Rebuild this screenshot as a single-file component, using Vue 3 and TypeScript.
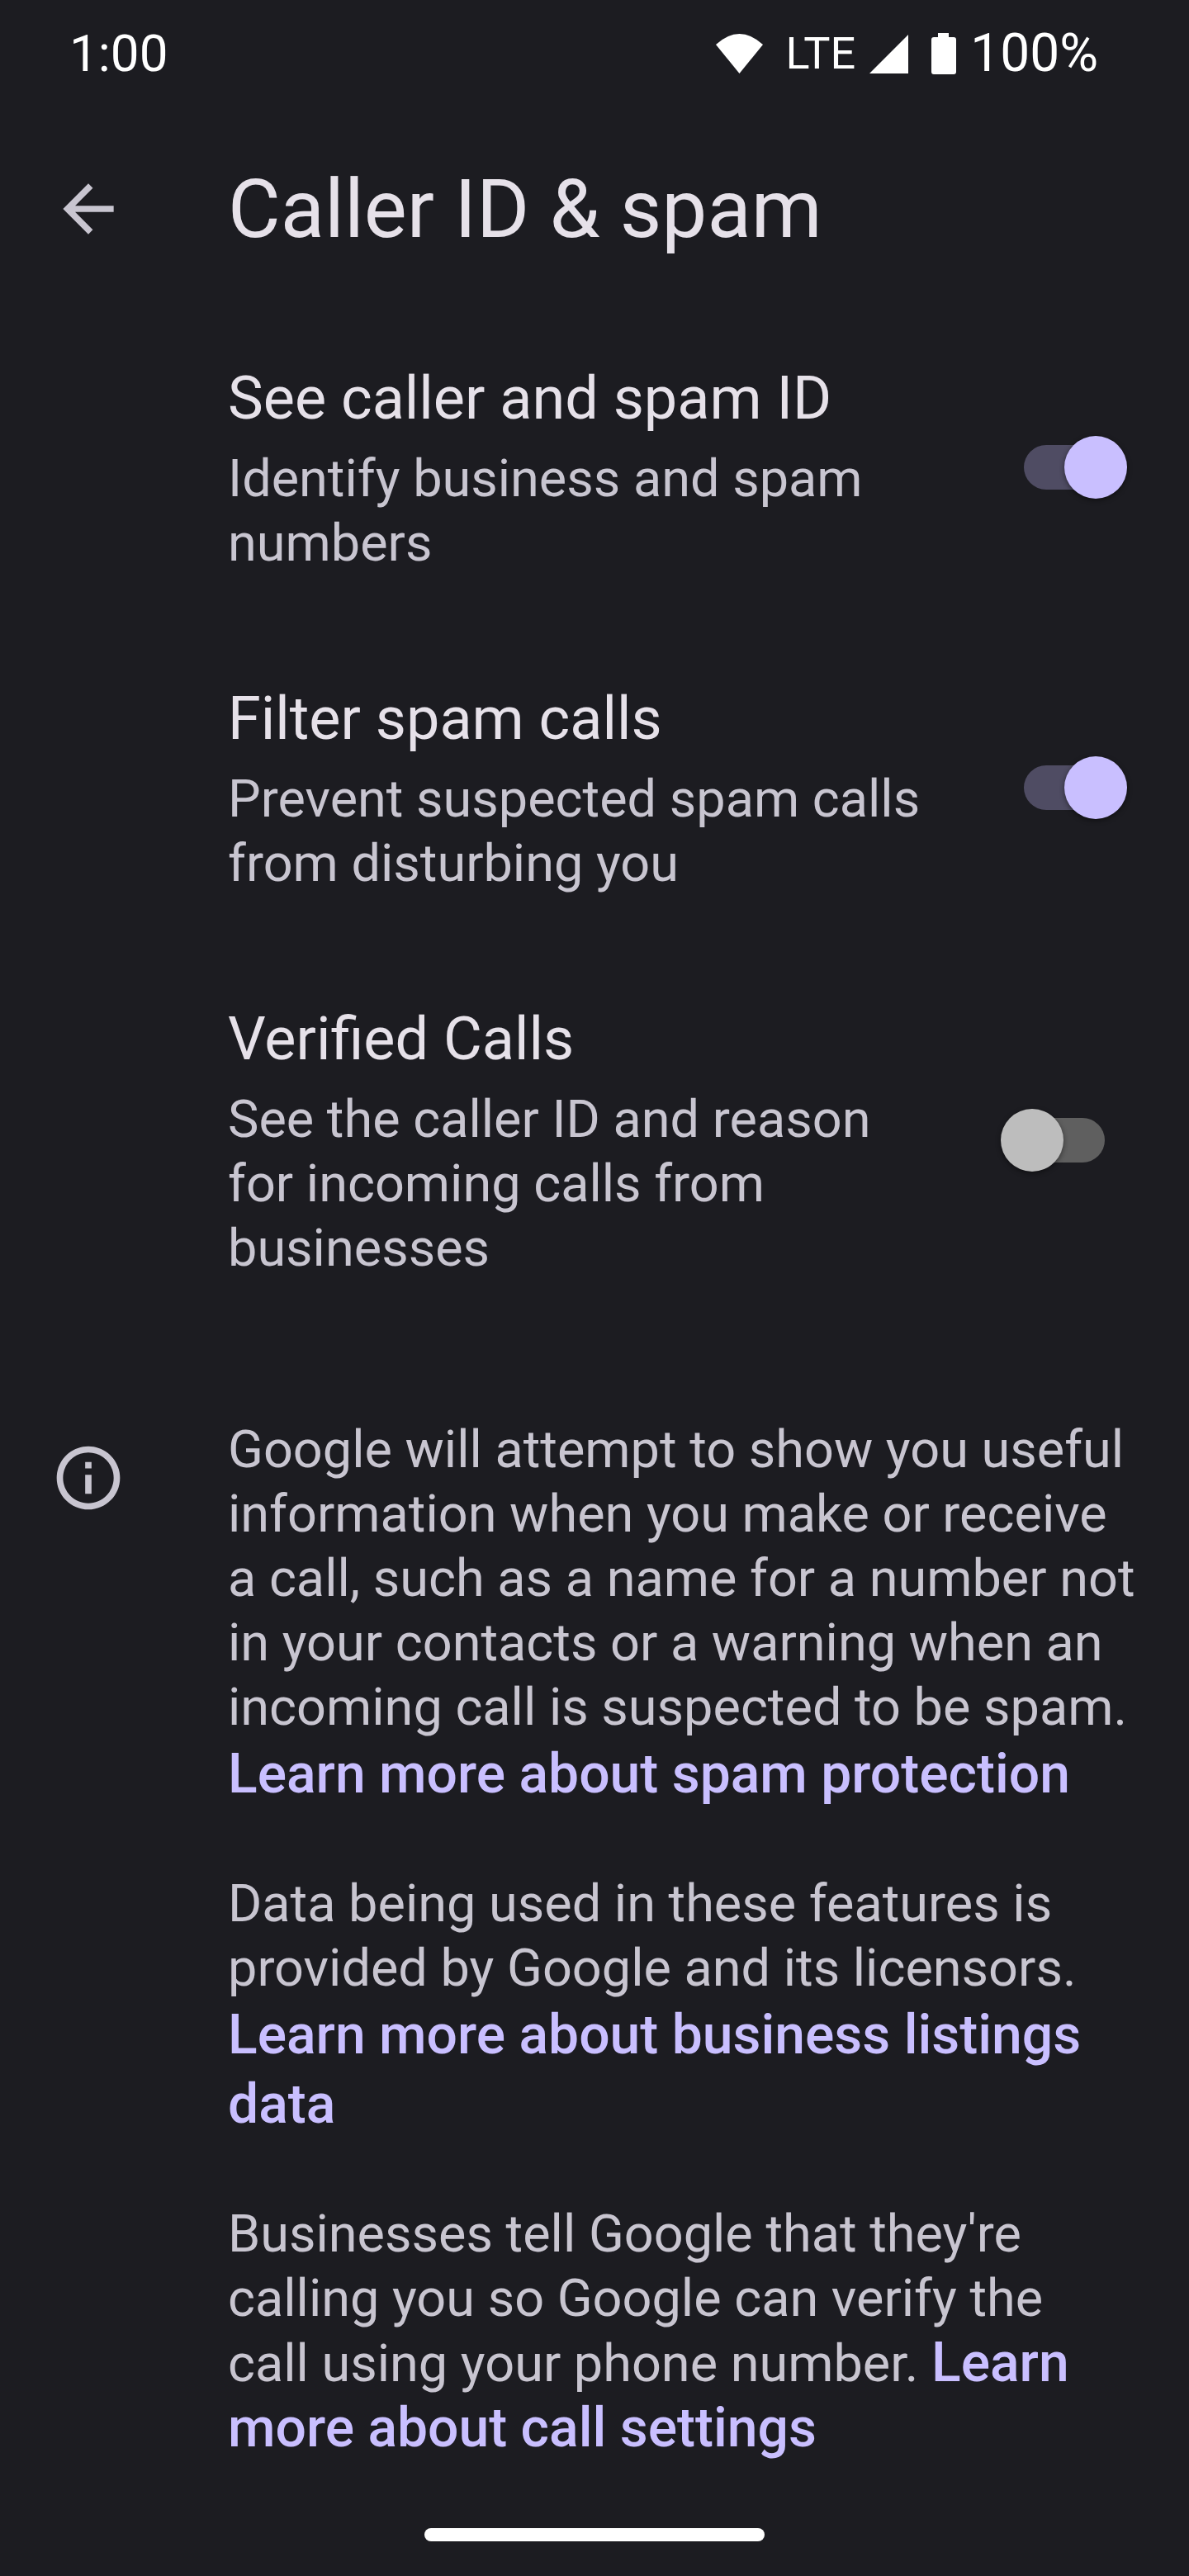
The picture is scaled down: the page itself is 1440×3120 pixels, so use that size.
<script setup lang="ts">
const rows = [
  { title: 'See caller and spam ID', lines: ['Identify business and spam', 'numbers'], on: true },
  { title: 'Filter spam calls', lines: ['Prevent suspected spam calls', 'from disturbing you'], on: true },
  { title: 'Verified Calls', lines: ['See the caller ID and reason', 'for incoming calls from', 'businesses'], on: false }
]
</script>

<template>
  <div class="screen">
    <div class="status">
      <span class="time">1:00</span>
      <div class="status-right">
        <svg class="wifi" width="57" height="48" viewBox="0 0 57 48"><path d="M0 13 Q28.5 -13 57 13 L28.5 48 Z" fill="#fff"/></svg>
        <span class="lte">LTE</span>
        <svg class="signal" width="47" height="47" viewBox="0 0 47 47"><path d="M47 0 V47 H0 Z" fill="#fff"/></svg>
        <svg class="battery" width="30" height="50" viewBox="0 0 30 50"><path d="M8 0 H21 V5 H27 Q30 5 30 8 V47 Q30 50 27 50 H3 Q0 50 0 47 V8 Q0 5 3 5 H8 Z" fill="#fff"/></svg>
        <span class="pct">100%</span>
      </div>
    </div>
    <div class="appbar">
      <div class="nav">
        <svg width="92" height="92" viewBox="0 0 24 24"><path d="M20 11H7.83l5.59-5.59L12 4l-8 8 8 8 1.41-1.41L7.83 13H20v-2z" fill="#c8c5d0"/></svg>
      </div>
      <h1>Caller ID &amp; spam</h1>
    </div>
    <div class="list">
      <div v-for="r in rows" :key="r.title" class="row">
        <div class="row-text">
          <div class="title">{{ r.title }}</div>
          <div class="sub">
            <div v-for="l in r.lines" :key="l">{{ l }}</div>
          </div>
        </div>
        <div class="switch" :class="{ on: r.on }"><span class="thumb"></span></div>
      </div>
    </div>
    <div class="info">
      <div class="info-icon">
        <svg width="92" height="92" viewBox="0 0 24 24"><path d="M11 7h2v2h-2zm0 4h2v6h-2zm1-9C6.48 2 2 6.48 2 12s4.48 10 10 10 10-4.48 10-10S17.52 2 12 2zm0 18c-4.41 0-8-3.59-8-8s3.59-8 8-8 8 3.59 8 8-3.59 8-8 8z" fill="#c8c5d0"/></svg>
      </div>
      <div class="info-text">
        <p>Google will attempt to show you useful<br>information when you make or receive<br>a call, such as a name for a number not<br>in your contacts or a warning when an<br>incoming call is suspected to be spam.<br><a class="link block">Learn more about spam protection</a></p>
        <p>Data being used in these features is<br>provided by Google and its licensors.<br><a class="link block">Learn more about business listings<br>data</a></p>
        <p>Businesses tell Google that they're<br>calling you so Google can verify the<br>call using your phone number. <a class="link">Learn<br>more about call settings</a></p>
      </div>
    </div>
    <div class="home"></div>
  </div>
</template>

<style>
html, body { margin: 0; background: #1c1c21; }
</style>

<style scoped>
.screen { position: relative; width: 1440px; height: 3120px; background: #1c1c21; font-family: Roboto, "Noto Sans", sans-serif; overflow: hidden; }
.status { display: flex; align-items: center; height: 50px; padding: 40px 110px 0 84px; color: #fff; }
.time { font-size: 62px; line-height: 50px; }
.status-right { display: flex; align-items: center; margin-left: auto; }
.lte { font-size: 54px; line-height: 50px; margin-left: 27px; }
.signal { margin-left: 17px; }
.battery { margin-left: 28px; }
.pct { font-size: 64px; line-height: 50px; margin-left: 17px; }
.appbar { display: flex; align-items: center; height: 128px; margin-top: 99px; }
.nav { width: 276px; padding-left: 61px; box-sizing: border-box; display: flex; }
h1 { margin: 0; font-weight: 400; font-size: 98px; color: #e6e1e9; }
.list { margin-top: 57px; display: flex; flex-direction: column; }
.row { display: flex; align-items: center; padding: 61px 102px 65px 276px; }
.row-text { flex: 1; }
.title { font-size: 72px; line-height: 96px; color: #e6e1e9; }
.sub { margin-top: 10px; font-size: 63px; line-height: 78px; color: #c8c5d0; }
.switch { position: relative; width: 98px; height: 54px; border-radius: 27px; background: #5f5f5f; }
.switch.on { background: #4f4c63; }
.thumb { position: absolute; left: -28px; top: -11px; width: 76px; height: 76px; border-radius: 50%; background: #bdbdbd; box-shadow: 0 2px 6px rgba(0, 0, 0, 0.45); }
.on .thumb { left: 49px; background: #c9bfff; }
.info { display: flex; margin-top: 101px; }
.info-icon { width: 276px; padding-left: 61px; box-sizing: border-box; padding-top: 27px; }
.info-text { font-size: 63px; line-height: 78px; color: #c8c5d0; white-space: nowrap; }
p { margin: 0 0 76px; }
.link { color: #c9bfff; font-weight: 500; font-size: 66px; line-height: 78px; }
.block { display: block; line-height: 84px; }
.home { position: absolute; left: 514px; top: 3062px; width: 412px; height: 16px; border-radius: 8px; background: #fff; }
</style>
